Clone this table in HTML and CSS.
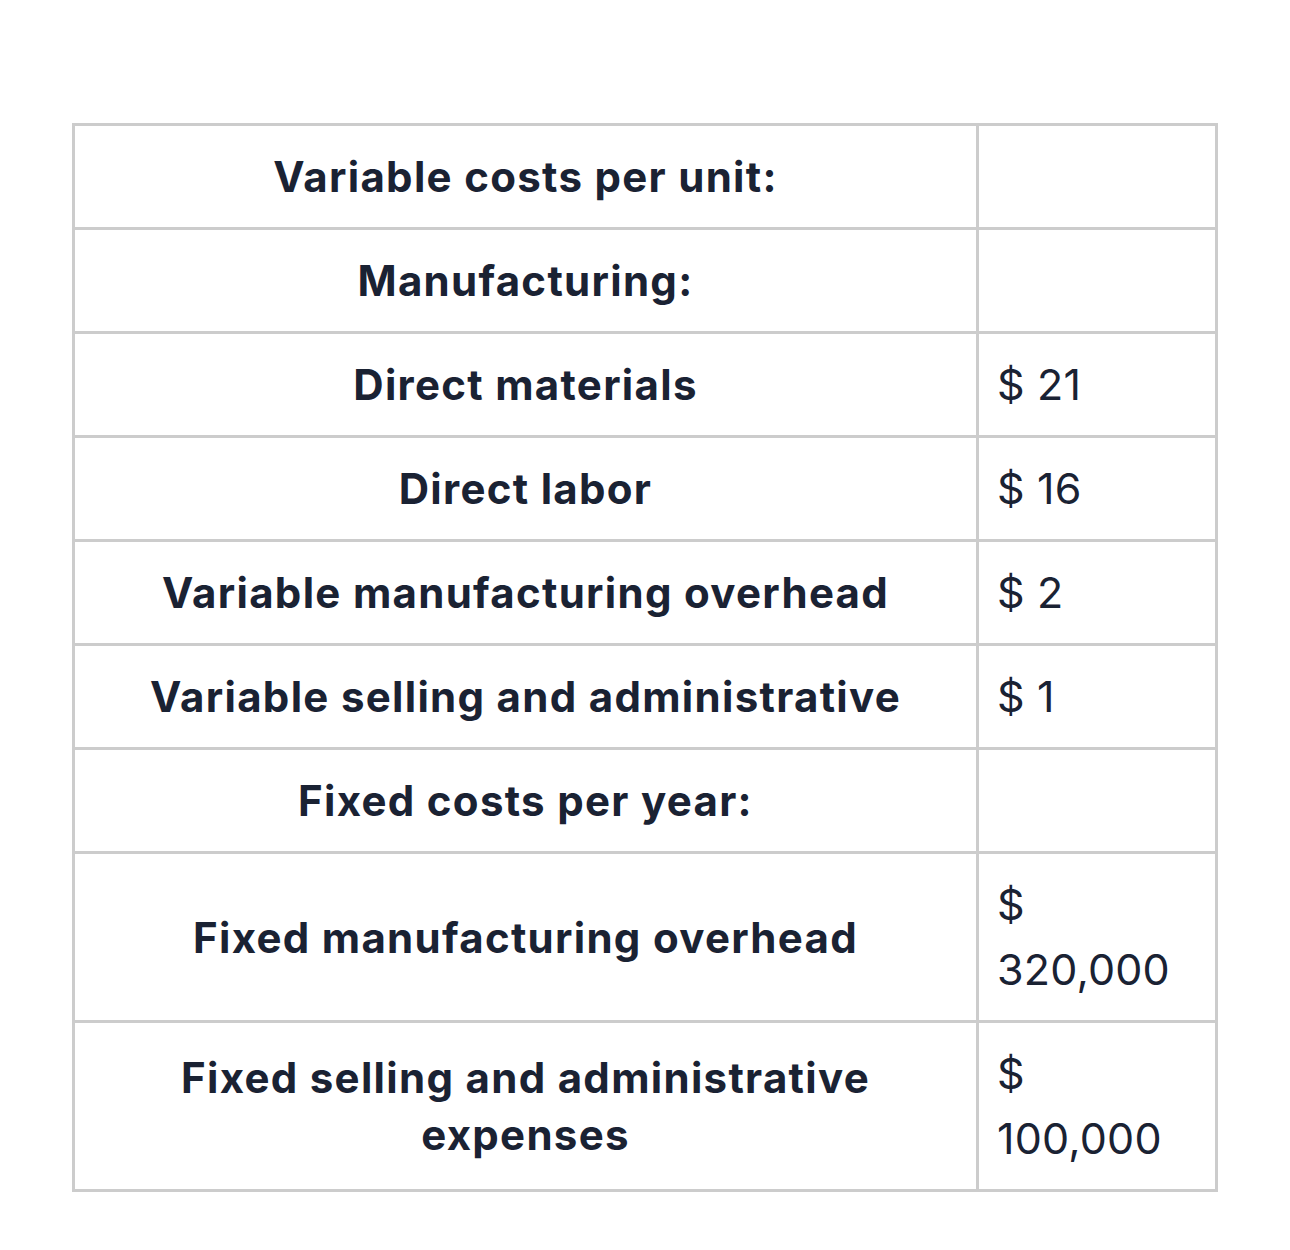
FILE: index.html
```html
<!DOCTYPE html>
<html>
<head>
<meta charset="utf-8">
<link rel="stylesheet" href="styles.css">
</head>
<body>
<div class="page">
  <table class="costs">
    <colgroup><col class="col-label"><col class="col-value"></colgroup>
    <tbody>
      <tr><td class="label">Variable costs per unit:</td><td class="value"></td></tr>
      <tr><td class="label">Manufacturing:</td><td class="value"></td></tr>
      <tr><td class="label">Direct materials</td><td class="value">$ 21</td></tr>
      <tr><td class="label">Direct labor</td><td class="value">$ 16</td></tr>
      <tr><td class="label">Variable manufacturing overhead</td><td class="value">$ 2</td></tr>
      <tr><td class="label">Variable selling and administrative</td><td class="value">$ 1</td></tr>
      <tr><td class="label">Fixed costs per year:</td><td class="value"></td></tr>
      <tr><td class="label">Fixed manufacturing overhead</td><td class="value">$<br>320,000</td></tr>
      <tr><td class="label">Fixed selling and administrative<br>expenses</td><td class="value">$<br>100,000</td></tr>
    </tbody>
  </table>
</div>
</body>
</html>
```

FILE: styles.css
```css
html, body {
  margin: 0;
  padding: 0;
  background: #ffffff;
}

.page {
  padding: 123px 0 0 72px;
}

.costs {
  border-collapse: collapse;
  width: 1146px;
  table-layout: fixed;
  font-family: Inter, "Noto Sans", sans-serif;
  color: #1a2233;
}

.col-label {
  width: 904px;
}

.costs td {
  border: 3px solid #cccccc;
  padding: 18px 16px;
  height: 65px;
  vertical-align: middle;
}

.costs .label {
  text-align: center;
  font-weight: 700;
  font-size: 42px;
  letter-spacing: 1.3px;
  line-height: 57px;
}

.costs .value {
  text-align: left;
  font-weight: 400;
  font-size: 43px;
  letter-spacing: 0.2px;
  line-height: 65px;
  padding-left: 18px;
}
```
